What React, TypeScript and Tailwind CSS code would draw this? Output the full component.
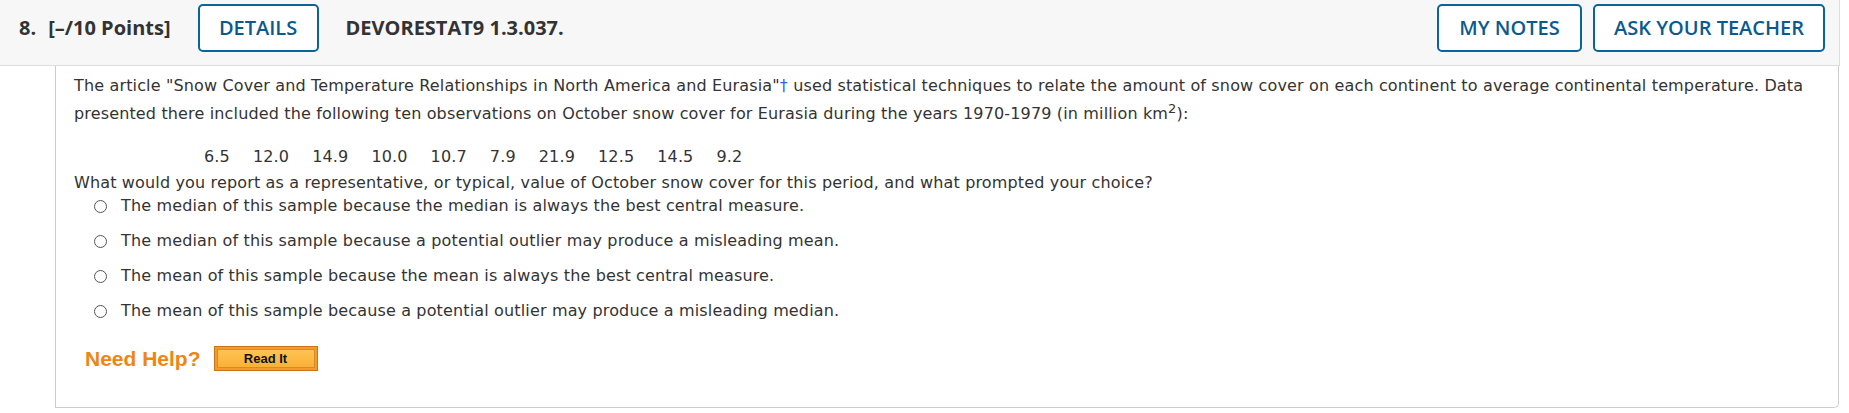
import React from 'react'

const BTN =
  'flex h-[48px] items-center justify-center rounded-[5px] border-2 border-[#0b639c] bg-white text-[20px] text-[#0b5a8e] font-semibold'

const VALUES = ['6.5', '12.0', '14.9', '10.0', '10.7', '7.9', '21.9', '12.5', '14.5', '9.2']

const OPTIONS = [
  'The median of this sample because the median is always the best central measure.',
  'The median of this sample because a potential outlier may produce a misleading mean.',
  'The mean of this sample because the mean is always the best central measure.',
  'The mean of this sample because a potential outlier may produce a misleading median.',
]

export default function App() {
  return (
    <div className="w-[1840px] bg-white">
      {/* Question header */}
      <div className="flex h-[66px] items-start border-b border-r border-[#dddddd] bg-[#f7f7f7] pl-[19px] pr-[14px] pt-[4px] font-['Open_Sans',sans-serif]">
        <div className="flex h-[48px] items-center text-[20px] font-bold text-[#333333]">
          <span>8.</span>
          <span className="ml-[12px]">[–/10 Points]</span>
        </div>
        <button className={`${BTN} ml-[27px] w-[121px]`}>DETAILS</button>
        <div className="ml-[27px] flex h-[48px] items-center text-[20px] font-bold text-[#333333]">
          DEVORESTAT9 1.3.037.
        </div>
        <div className="ml-auto flex gap-[11px]">
          <button className={`${BTN} w-[145px]`}>MY NOTES</button>
          <button className={`${BTN} w-[232px]`}>ASK YOUR TEACHER</button>
        </div>
      </div>

      {/* Question body */}
      <div className="ml-[55px] w-[1784px] rounded-br-[5px] border-b border-l border-r border-[#cccccc] pb-[32px] pl-[18px] pr-[14px] pt-[6px] font-['DejaVu_Sans',Verdana,sans-serif] text-[16px] tracking-[0.15px] text-[#333333]">
        <p className="leading-[28px]">
          The article "Snow Cover and Temperature Relationships in North America and Eurasia"
          <span className="text-[#3366dd]">†</span> used statistical techniques to relate the amount of snow
          cover on each continent to average continental temperature. Data presented there included the
          following ten observations on October snow cover for Eurasia during the years 1970-1979 (in
          million km<sup className="text-[13px] leading-none">2</sup>):
        </p>

        <div className="mt-[18px] flex gap-[23px] pl-[130px] leading-[22px]">
          {VALUES.map((v, i) => (
            <span key={i}>{v}</span>
          ))}
        </div>

        <p className="mt-[4px] leading-[22px]">
          What would you report as a representative, or typical, value of October snow cover for this period,
          and what prompted your choice?
        </p>

        <div className="flex flex-col gap-[13px] pl-[20px] pt-[1px]">
          {OPTIONS.map((o) => (
            <label key={o} className="flex h-[22px] items-center">
              <span className="h-[13px] w-[13px] rounded-full border border-[#555555] bg-white" />
              <span className="ml-[14px]">{o}</span>
            </label>
          ))}
        </div>

        <div className="mt-[21px] flex items-center pl-[11px] font-['Liberation_Sans',Arial,sans-serif] tracking-normal">
          <span className="text-[21px] font-bold text-[#ee8614]">Need Help?</span>
          <button className="ml-[13px] h-[25px] w-[104px] border border-[#c87418] bg-[#f59a2a] p-[2px]">
            <span className="flex h-full w-full items-center justify-center border border-[#d98a2e] bg-gradient-to-b from-[#ffc452] to-[#fbb035] text-[13px] font-bold text-[#111111]">
              Read It
            </span>
          </button>
        </div>
      </div>
    </div>
  )
}
